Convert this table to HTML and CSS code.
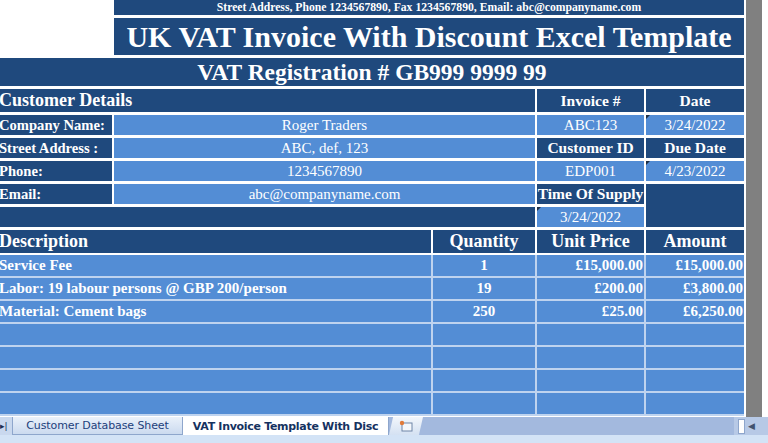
FILE: index.html
```html
<!DOCTYPE html>
<html>
<head>
<meta charset="utf-8">
<link rel="stylesheet" href="styles.css">
</head>
<body>
<div class="sheet">
  <div class="main">
    <div class="top">
      <div class="cell dark addr">Street Address, Phone 1234567890, Fax 1234567890, Email: abc@companyname.com</div>
      <div class="cell dark title">UK VAT Invoice With Discount Excel Template</div>
      <div class="cell dark vat">VAT Registration # GB999 9999 99</div>

      <div class="cell dark custhead">Customer Details</div>
      <div class="cell dark hdr">Invoice #</div>
      <div class="cell dark hdr">Date</div>

      <div class="cell dark lbl">Company Name:</div>
      <div class="cell light val span-bc">Roger Traders</div>
      <div class="cell light val">ABC123</div>
      <div class="cell light val mark">3/24/2022</div>

      <div class="cell dark lbl">Street Address :</div>
      <div class="cell light val span-bc">ABC, def, 123</div>
      <div class="cell dark hdr">Customer ID</div>
      <div class="cell dark hdr">Due Date</div>

      <div class="cell dark lbl">Phone:</div>
      <div class="cell light val span-bc">1234567890</div>
      <div class="cell light val">EDP001</div>
      <div class="cell light val mark">4/23/2022</div>

      <div class="cell dark lbl">Email:</div>
      <div class="cell light val span-bc">abc@companyname.com</div>
      <div class="cell dark hdr">Time Of Supply</div>
      <div class="cell dark tall"></div>

      <div class="cell dark blank"></div>
      <div class="cell light val mark tos">3/24/2022</div>
    </div>

    <div class="items-head">
      <div class="cell dark ih left">Description</div>
      <div class="cell dark ih">Quantity</div>
      <div class="cell dark ih">Unit Price</div>
      <div class="cell dark ih">Amount</div>
    </div>
    <div class="items">
      <div class="cell light it left">Service Fee</div>
      <div class="cell light it">1</div>
      <div class="cell light it num">£15,000.00</div>
      <div class="cell light it num">£15,000.00</div>

      <div class="cell light it left">Labor: 19 labour persons @ GBP 200/person</div>
      <div class="cell light it">19</div>
      <div class="cell light it num">£200.00</div>
      <div class="cell light it num">£3,800.00</div>

      <div class="cell light it left">Material: Cement bags</div>
      <div class="cell light it">250</div>
      <div class="cell light it num">£25.00</div>
      <div class="cell light it num">£6,250.00</div>

      <div class="cell light it"></div><div class="cell light it"></div><div class="cell light it"></div><div class="cell light it"></div>
      <div class="cell light it"></div><div class="cell light it"></div><div class="cell light it"></div><div class="cell light it"></div>
      <div class="cell light it"></div><div class="cell light it"></div><div class="cell light it"></div><div class="cell light it"></div>
      <div class="cell light it"></div><div class="cell light it"></div><div class="cell light it"></div><div class="cell light it"></div>
    </div>
  </div>
  <div class="vscroll"></div>
</div>
<div class="tabbar">
  <div class="nav">&#9656;|</div>
  <div class="tab">Customer Database Sheet</div>
  <div class="tab active">VAT Invoice Template With Disc</div>
  <div class="newtab">
    <svg width="16" height="12" viewBox="0 0 16 12">
      <rect x="4" y="3" width="10" height="8" fill="#f4f7fb" stroke="#6f86a8" stroke-width="1"/>
      <circle cx="4" cy="3" r="2.2" fill="#e07a3a"/>
    </svg>
  </div>
  <div class="fill"></div>
  <div class="hscroll"><span class="thumb"></span><span class="arr">&#9664;</span></div>
</div>
<div class="strip"></div>
</body>
</html>
```
FILE: styles.css
```css
html, body {
  margin: 0;
  padding: 0;
  background: #ffffff;
}
body {
  width: 768px;
  height: 443px;
  overflow: hidden;
  font-family: "Liberation Serif", "Times New Roman", serif;
}
.sheet {
  display: flex;
  height: 417px;
  overflow: hidden;
}
.main {
  width: 744px;
  flex: none;
}
.vscroll {
  width: 16px;
  margin-left: 2px;
  background: #808080;
  flex: none;
}
.cell {
  display: flex;
  align-items: center;
  justify-content: center;
  color: #ffffff;
  white-space: nowrap;
  overflow: hidden;
  position: relative;
}
.dark { background: #1f497d; }
.light { background: #538dd5; }

.top {
  display: grid;
  grid-template-columns: 112px 317px 102px 107px 98px;
  grid-template-rows: 15px 37px 28px 23px 20px 20px 20px 20px 20px;
  column-gap: 2px;
  row-gap: 3px;
}
.addr {
  grid-column: 2 / 6;
  font-weight: bold;
  font-size: 11.7px;
}
.title {
  grid-column: 2 / 6;
  font-weight: bold;
  font-size: 30px;
  padding-top: 1px;
}
.vat {
  grid-column: 1 / 6;
  font-weight: bold;
  font-size: 23.5px;
}
.custhead {
  grid-column: 1 / 4;
  justify-content: flex-start;
  font-weight: bold;
  font-size: 18px;
  margin-left: -1px;
}
.hdr {
  font-weight: bold;
  font-size: 15.5px;
}
.lbl {
  justify-content: flex-start;
  font-weight: bold;
  font-size: 14.6px;
  margin-left: -1px;
}
.val {
  font-size: 15px;
}
.span-bc { grid-column: 2 / 4; }
.tall {
  grid-column: 5;
  grid-row: 8 / 10;
}
.blank { grid-column: 1 / 4; }
.tos { grid-column: 4; }
.mark::before {
  content: "";
  position: absolute;
  left: 0;
  top: 0;
  border-top: 4px solid #1f2f45;
  border-right: 4px solid transparent;
}

.items-head {
  display: grid;
  grid-template-columns: 431px 102px 107px 98px;
  grid-template-rows: 23px;
  column-gap: 2px;
  margin-top: 3px;
  width: 744px;
}
.ih {
  font-weight: bold;
  font-size: 18px;
}
.left {
  justify-content: flex-start;
  margin-left: -1px;
}
.items {
  display: grid;
  grid-template-columns: 431px 102px 107px 98px;
  grid-auto-rows: 21px;
  column-gap: 2px;
  row-gap: 2px;
  margin-top: 2px;
  padding-bottom: 2px;
  background: #bed3ef;
  width: 744px;
}
.it {
  font-weight: bold;
  font-size: 15px;
}
.num {
  justify-content: flex-end;
  padding-right: 1px;
}

.tabbar {
  display: flex;
  align-items: stretch;
  height: 18px;
  background: #a3b9de;
  font-family: "DejaVu Sans", Verdana, sans-serif;
  font-size: 11px;
  color: #1d3f7b;
}
.nav {
  width: 12px;
  display: flex;
  align-items: center;
  font-size: 9px;
  color: #1b2f52;
  background: #c9d8ee;
  border-right: 1px solid #8ea6cc;
}
.tab {
  display: flex;
  align-items: center;
  justify-content: center;
  width: 169px;
  background: linear-gradient(#eaf1fa, #cbdaef);
  border-right: 1px solid #8ea6cc;
  border-bottom: 1px solid #8ea6cc;
  letter-spacing: -0.1px;
}
.tab.active {
  width: 205px;
  background: #ffffff;
  font-weight: bold;
  font-size: 11px;
  color: #15325f;
  letter-spacing: -0.3px;
  border-bottom: none;
}
.newtab {
  width: 34px;
  display: flex;
  align-items: center;
  justify-content: center;
  background: linear-gradient(#f2f6fb, #d4e1f2);
  clip-path: polygon(12% 0, 100% 0, 88% 100%, 0 100%);
}
.fill {
  flex: 1;
}
.hscroll {
  width: 30px;
  display: flex;
  align-items: center;
  gap: 3px;
  padding-left: 4px;
  background: #b7c9e6;
}
.thumb {
  width: 5px;
  height: 13px;
  background: #ffffff;
  border: 1px solid #8ea6cc;
}
.arr {
  font-size: 9px;
  color: #42536e;
}
.strip {
  height: 8px;
  background: #d3e3f6;
}
```
